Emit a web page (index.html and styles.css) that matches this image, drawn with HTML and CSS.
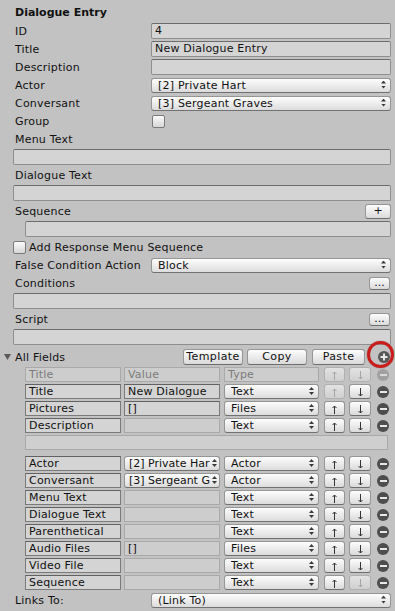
FILE: index.html
```html
<!DOCTYPE html>
<html lang="en">
<head>
    <meta charset="UTF-8">
    <link rel="stylesheet" href="styles.css">
    <title>Dialogue Entry</title>
</head>
<body>
    <div class="inspector">
        <div class="heading">Dialogue Entry</div>

        <div class="row"><span class="label">ID</span><div class="field">4</div></div>
        <div class="row"><span class="label">Title</span><div class="field">New Dialogue Entry</div></div>
        <div class="row"><span class="label">Description</span><div class="field"></div></div>
        <div class="row"><span class="label">Actor</span><div class="popup"><span class="ptext">[2] Private Hart</span><span class="arr"></span></div></div>
        <div class="row"><span class="label">Conversant</span><div class="popup"><span class="ptext">[3] Sergeant Graves</span><span class="arr"></span></div></div>
        <div class="row"><span class="label">Group</span><span class="check group-check"></span></div>

        <div class="row"><span class="label">Menu Text</span></div>
        <div class="block"><div class="field"></div></div>
        <div class="row"><span class="label">Dialogue Text</span></div>
        <div class="block"><div class="field"></div></div>
        <div class="row"><span class="label">Sequence</span><span class="spacer"></span><button class="btn plus-btn">+</button></div>
        <div class="block indent"><div class="field"></div></div>

        <div class="row"><span class="check"></span><span class="check-text">Add Response Menu Sequence</span></div>
        <div class="row"><span class="label">False Condition Action</span><div class="popup"><span class="ptext">Block</span><span class="arr"></span></div></div>
        <div class="row"><span class="label">Conditions</span><span class="spacer"></span><button class="btn dots">...</button></div>
        <div class="block"><div class="field"></div></div>
        <div class="row"><span class="label">Script</span><span class="spacer"></span><button class="btn dots">...</button></div>
        <div class="block"><div class="field"></div></div>

        <div class="row fields-head">
            <svg class="fold" width="7" height="6" viewBox="0 0 7 6"><polygon points="0,0 7,0 3.5,6" fill="#5a5a5a"/></svg>
            <span class="label">All Fields</span>
            <span class="spacer"></span>
            <button class="btn tool template">Template</button>
            <button class="btn tool copy">Copy</button>
            <button class="btn tool paste">Paste</button>
            <span class="circle add"><svg width="12" height="12" viewBox="0 0 12 12"><circle cx="6" cy="6" r="6" fill="#575757"/><rect x="2.5" y="5" width="7" height="2" fill="#e8e8e8"/><rect x="5" y="2.5" width="2" height="7" fill="#e8e8e8"/></svg></span>
            <span class="ring"></span>
        </div>

        <div class="table">
            <div class="trow head">
                <div class="cell name off">Title</div>
                <div class="cell val off">Value</div>
                <div class="cell type off">Type</div>
                <button class="btn mv off"><svg width="5" height="9" viewBox="0 0 5 9"><path d="M2.5 1V9M0.5 3L2.5 1L4.5 3" stroke="currentColor" fill="none"/></svg></button>
                <button class="btn mv dn off"><svg width="5" height="9" viewBox="0 0 5 9"><path d="M2.5 0V8M0.5 6L2.5 8L4.5 6" stroke="currentColor" fill="none"/></svg></button>
                <span class="circle minus off"></span>
            </div>
            <div class="trow">
                <div class="cell name">Title</div>
                <div class="cell val">New Dialogue</div>
                <div class="popup type"><span class="ptext">Text</span><span class="arr"></span></div>
                <button class="btn mv off"><svg width="5" height="9" viewBox="0 0 5 9"><path d="M2.5 1V9M0.5 3L2.5 1L4.5 3" stroke="currentColor" fill="none"/></svg></button>
                <button class="btn mv dn"><svg width="5" height="9" viewBox="0 0 5 9"><path d="M2.5 0V8M0.5 6L2.5 8L4.5 6" stroke="currentColor" fill="none"/></svg></button>
                <span class="circle minus"></span>
            </div>
            <div class="trow">
                <div class="cell name">Pictures</div>
                <div class="cell val">[]</div>
                <div class="popup type"><span class="ptext">Files</span><span class="arr"></span></div>
                <button class="btn mv"><svg width="5" height="9" viewBox="0 0 5 9"><path d="M2.5 1V9M0.5 3L2.5 1L4.5 3" stroke="currentColor" fill="none"/></svg></button>
                <button class="btn mv dn"><svg width="5" height="9" viewBox="0 0 5 9"><path d="M2.5 0V8M0.5 6L2.5 8L4.5 6" stroke="currentColor" fill="none"/></svg></button>
                <span class="circle minus"></span>
            </div>
            <div class="trow">
                <div class="cell name">Description</div>
                <div class="cell val off"></div>
                <div class="popup type"><span class="ptext">Text</span><span class="arr"></span></div>
                <button class="btn mv"><svg width="5" height="9" viewBox="0 0 5 9"><path d="M2.5 1V9M0.5 3L2.5 1L4.5 3" stroke="currentColor" fill="none"/></svg></button>
                <button class="btn mv dn"><svg width="5" height="9" viewBox="0 0 5 9"><path d="M2.5 0V8M0.5 6L2.5 8L4.5 6" stroke="currentColor" fill="none"/></svg></button>
                <span class="circle minus"></span>
            </div>
            <div class="trow wide"><div class="cell long"></div></div>

            <div class="trow gap">
                <div class="cell name">Actor</div>
                <div class="popup val"><span class="ptext">[2] Private Har</span><span class="arr"></span></div>
                <div class="popup type"><span class="ptext">Actor</span><span class="arr"></span></div>
                <button class="btn mv"><svg width="5" height="9" viewBox="0 0 5 9"><path d="M2.5 1V9M0.5 3L2.5 1L4.5 3" stroke="currentColor" fill="none"/></svg></button>
                <button class="btn mv dn"><svg width="5" height="9" viewBox="0 0 5 9"><path d="M2.5 0V8M0.5 6L2.5 8L4.5 6" stroke="currentColor" fill="none"/></svg></button>
                <span class="circle minus"></span>
            </div>
            <div class="trow">
                <div class="cell name">Conversant</div>
                <div class="popup val"><span class="ptext">[3] Sergeant G</span><span class="arr"></span></div>
                <div class="popup type"><span class="ptext">Actor</span><span class="arr"></span></div>
                <button class="btn mv"><svg width="5" height="9" viewBox="0 0 5 9"><path d="M2.5 1V9M0.5 3L2.5 1L4.5 3" stroke="currentColor" fill="none"/></svg></button>
                <button class="btn mv dn"><svg width="5" height="9" viewBox="0 0 5 9"><path d="M2.5 0V8M0.5 6L2.5 8L4.5 6" stroke="currentColor" fill="none"/></svg></button>
                <span class="circle minus"></span>
            </div>
            <div class="trow">
                <div class="cell name">Menu Text</div>
                <div class="cell val off"></div>
                <div class="popup type"><span class="ptext">Text</span><span class="arr"></span></div>
                <button class="btn mv"><svg width="5" height="9" viewBox="0 0 5 9"><path d="M2.5 1V9M0.5 3L2.5 1L4.5 3" stroke="currentColor" fill="none"/></svg></button>
                <button class="btn mv dn"><svg width="5" height="9" viewBox="0 0 5 9"><path d="M2.5 0V8M0.5 6L2.5 8L4.5 6" stroke="currentColor" fill="none"/></svg></button>
                <span class="circle minus"></span>
            </div>
            <div class="trow">
                <div class="cell name">Dialogue Text</div>
                <div class="cell val off"></div>
                <div class="popup type"><span class="ptext">Text</span><span class="arr"></span></div>
                <button class="btn mv"><svg width="5" height="9" viewBox="0 0 5 9"><path d="M2.5 1V9M0.5 3L2.5 1L4.5 3" stroke="currentColor" fill="none"/></svg></button>
                <button class="btn mv dn"><svg width="5" height="9" viewBox="0 0 5 9"><path d="M2.5 0V8M0.5 6L2.5 8L4.5 6" stroke="currentColor" fill="none"/></svg></button>
                <span class="circle minus"></span>
            </div>
            <div class="trow">
                <div class="cell name">Parenthetical</div>
                <div class="cell val off"></div>
                <div class="popup type"><span class="ptext">Text</span><span class="arr"></span></div>
                <button class="btn mv"><svg width="5" height="9" viewBox="0 0 5 9"><path d="M2.5 1V9M0.5 3L2.5 1L4.5 3" stroke="currentColor" fill="none"/></svg></button>
                <button class="btn mv dn"><svg width="5" height="9" viewBox="0 0 5 9"><path d="M2.5 0V8M0.5 6L2.5 8L4.5 6" stroke="currentColor" fill="none"/></svg></button>
                <span class="circle minus"></span>
            </div>
            <div class="trow">
                <div class="cell name">Audio Files</div>
                <div class="cell val off dark">[]</div>
                <div class="popup type"><span class="ptext">Files</span><span class="arr"></span></div>
                <button class="btn mv"><svg width="5" height="9" viewBox="0 0 5 9"><path d="M2.5 1V9M0.5 3L2.5 1L4.5 3" stroke="currentColor" fill="none"/></svg></button>
                <button class="btn mv dn"><svg width="5" height="9" viewBox="0 0 5 9"><path d="M2.5 0V8M0.5 6L2.5 8L4.5 6" stroke="currentColor" fill="none"/></svg></button>
                <span class="circle minus"></span>
            </div>
            <div class="trow">
                <div class="cell name">Video File</div>
                <div class="cell val off"></div>
                <div class="popup type"><span class="ptext">Text</span><span class="arr"></span></div>
                <button class="btn mv"><svg width="5" height="9" viewBox="0 0 5 9"><path d="M2.5 1V9M0.5 3L2.5 1L4.5 3" stroke="currentColor" fill="none"/></svg></button>
                <button class="btn mv dn"><svg width="5" height="9" viewBox="0 0 5 9"><path d="M2.5 0V8M0.5 6L2.5 8L4.5 6" stroke="currentColor" fill="none"/></svg></button>
                <span class="circle minus"></span>
            </div>
            <div class="trow">
                <div class="cell name">Sequence</div>
                <div class="cell val off"></div>
                <div class="popup type"><span class="ptext">Text</span><span class="arr"></span></div>
                <button class="btn mv"><svg width="5" height="9" viewBox="0 0 5 9"><path d="M2.5 1V9M0.5 3L2.5 1L4.5 3" stroke="currentColor" fill="none"/></svg></button>
                <button class="btn mv dn off"><svg width="5" height="9" viewBox="0 0 5 9"><path d="M2.5 0V8M0.5 6L2.5 8L4.5 6" stroke="currentColor" fill="none"/></svg></button>
                <span class="circle minus"></span>
            </div>
        </div>

        <div class="row"><span class="label">Links To:</span><div class="popup"><span class="ptext">(Link To)</span><span class="arr"></span></div></div>
    </div>
</body>
</html>
```

FILE: styles.css
```css
body {
    margin: 0;
    background-color: #c2c2c2;
    font-family: "DejaVu Sans", Verdana, sans-serif;
    font-size: 11px;
    color: #111;
}

.inspector {
    padding: 4px 4px 0 13px;
}

.heading {
    height: 18px;
    line-height: 18px;
    padding-left: 2px;
    font-weight: bold;
}

.row {
    display: flex;
    align-items: center;
    height: 18px;
    position: relative;
}

.label {
    flex: none;
    width: 136px;
    padding-left: 2px;
    white-space: nowrap;
    letter-spacing: 0.2px;
}

.spacer {
    flex: 1;
}

.field {
    flex: 1;
    box-sizing: border-box;
    height: 16px;
    line-height: 14px;
    padding: 0 3px;
    background-color: #d4d4d4;
    border: 1px solid #8e8e8e;
    border-top-color: #6c6c6c;
    border-radius: 2px;
    white-space: nowrap;
    overflow: hidden;
    letter-spacing: 0.2px;
}

.block {
    display: flex;
    box-sizing: border-box;
    height: 18px;
    padding: 1px 0;
}

.block.indent {
    padding-left: 12px;
}

.popup {
    flex: 1;
    display: flex;
    align-items: center;
    box-sizing: border-box;
    height: 15px;
    padding: 0 4px 0 6px;
    background: linear-gradient(#fdfdfd, #dcdcdc);
    border: 1px solid #959595;
    border-bottom-color: #717171;
    border-radius: 3px;
    overflow: hidden;
    white-space: nowrap;
}

.ptext {
    flex: 1;
    overflow: hidden;
    letter-spacing: 0.2px;
}

/* small up/down popup marker */
.arr {
    flex: none;
    position: relative;
    width: 5px;
    height: 9px;
    margin-left: 2px;
}

.arr::before,
.arr::after {
    content: "";
    position: absolute;
    left: 0;
    width: 5px;
    height: 3px;
    background-color: #3a3a3a;
}

.arr::before {
    top: 0;
    clip-path: polygon(50% 0, 100% 100%, 0 100%);
}

.arr::after {
    top: 5px;
    clip-path: polygon(0 0, 100% 0, 50% 100%);
}

.check {
    flex: none;
    box-sizing: border-box;
    width: 13px;
    height: 13px;
    background: linear-gradient(#fafafa, #d6d6d6);
    border: 1px solid #7a7a7a;
    border-radius: 2px;
}

.group-check {
    margin-left: 1px;
}

.check-text {
    margin-left: 3px;
    letter-spacing: 0.2px;
}

.btn {
    box-sizing: border-box;
    margin: 0;
    padding: 0;
    font-family: inherit;
    font-size: 11px;
    color: #111;
    background: linear-gradient(#fdfdfd, #dadada);
    border: 1px solid #969696;
    border-bottom-color: #6e6e6e;
    border-radius: 3px;
    text-align: center;
    line-height: 12px;
}

.plus-btn {
    width: 26px;
    height: 15px;
}

.dots {
    width: 21px;
    height: 13px;
    line-height: 8px;
    margin-right: 1px;
}

.fields-head {
    margin-top: 2px;
}

.fold {
    flex: none;
    margin-left: -9px;
    margin-right: 4px;
}

.fields-head .label {
    width: auto;
    padding-left: 0;
}

.tool {
    height: 16px;
    letter-spacing: 0.4px;
}

.template {
    width: 60px;
}

.copy {
    width: 60px;
    margin-left: 4px;
}

.paste {
    width: 53px;
    margin-left: 5px;
}

.circle {
    flex: none;
    width: 12px;
    height: 12px;
}

.add {
    margin-left: 13px;
    margin-right: 1px;
    display: flex;
}

.ring {
    position: absolute;
    right: -3px;
    top: -7px;
    width: 27px;
    height: 27px;
    box-sizing: border-box;
    border: 3px solid #c91c1c;
    border-radius: 50%;
    box-shadow: 0 0 1px #6a1010;
}

.trow {
    display: flex;
    align-items: center;
    height: 17px;
    padding-left: 12px;
}

.trow.gap {
    margin-top: 4px;
}

.cell {
    flex: none;
    box-sizing: border-box;
    height: 15px;
    line-height: 13px;
    padding: 0 3px;
    background-color: #d4d4d4;
    border: 1px solid #7a7a7a;
    border-top-color: #626262;
    white-space: nowrap;
    overflow: hidden;
    letter-spacing: 0.2px;
}

.cell.off {
    background-color: #cdcdcd;
    border-color: #a9a9a9;
    color: #7c7c7c;
}

.cell.dark {
    color: #111;
}

.name {
    width: 96px;
}

.val {
    width: 96px;
    margin-left: 3px;
}

.popup.val {
    flex: none;
    padding-left: 4px;
    padding-right: 2px;
}

.popup.val .ptext {
    letter-spacing: 0;
}

.type {
    flex: none;
    width: 95px;
    margin-left: 4px;
}

.long {
    width: 363px;
    background-color: #cfcfcf;
    border-color: #a9a9a9;
}

.mv {
    flex: none;
    display: flex;
    align-items: center;
    justify-content: center;
    width: 21px;
    height: 15px;
    margin-left: 5px;
    color: #333;
}

.mv svg {
    margin-top: 2px;
}

.mv.dn {
    width: 22px;
    margin-left: 4px;
}

.mv.off {
    color: #a4a4a4;
    border-color: #b0b0b0;
    background: linear-gradient(#e2e2e2, #d0d0d0);
}

.minus {
    margin-left: 6px;
    border-radius: 50%;
    background: linear-gradient(#e8e8e8, #e8e8e8) center / 7px 2px no-repeat, #4e4e4e;
}

.minus.off {
    background: linear-gradient(#d8d8d8, #d8d8d8) center / 7px 2px no-repeat, #a0a0a0;
}
```
